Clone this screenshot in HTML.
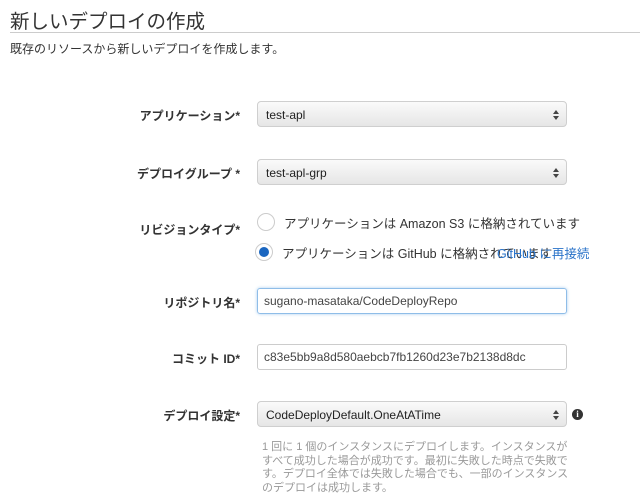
<!DOCTYPE html>
<html><head><meta charset="utf-8"><style>
body{margin:0;width:640px;height:494px;background:#fff;font-family:"Liberation Sans","Noto Sans CJK JP",sans-serif;color:#333;position:relative;overflow:hidden}
.a{position:absolute;white-space:nowrap}
.lbl{position:absolute;right:400px;font-size:12px;font-weight:bold;color:#333}
.sel{position:absolute;left:257px;width:310px;height:26px;border:1px solid #cfcfcf;border-radius:4px;background:linear-gradient(#fafafa,#e6e6e6);box-sizing:border-box;font-size:12px;line-height:26px;padding-left:8px;color:#222}
.sel:after{content:"";position:absolute;right:7px;top:8px;width:0;height:0;border-left:3px solid transparent;border-right:3px solid transparent;border-bottom:4px solid #444}
.sel:before{content:"";position:absolute;right:7px;top:14px;width:0;height:0;border-left:3px solid transparent;border-right:3px solid transparent;border-top:4px solid #444}
.inp{position:absolute;left:257px;width:310px;height:26px;border:1px solid #ccc;border-radius:3px;box-sizing:border-box;font-size:12px;line-height:24px;padding-left:6px;color:#444}
</style></head><body>
<div class="a" style="left:10px;top:5px;font-size:19.5px;color:#333">新しいデプロイの作成</div>
<div class="a" style="left:10px;top:32px;width:630px;height:1px;background:#ccc"></div>
<div class="a" style="left:10px;top:40px;font-size:12px;color:#333">既存のリソースから新しいデプロイを作成します。</div>

<div class="lbl" style="top:107px">アプリケーション*</div>
<div class="sel" style="top:101px">test-apl</div>

<div class="lbl" style="top:165px">デプロイグループ *</div>
<div class="sel" style="top:159px">test-apl-grp</div>

<div class="lbl" style="top:221px">リビジョンタイプ*</div>
<div class="a" style="left:257px;top:213px;width:18px;height:18px;border:1px solid #ccc;border-radius:50%;box-sizing:border-box"></div>
<div class="a" style="left:284px;top:213px;font-size:12.5px;color:#333">アプリケーションは Amazon S3 に格納されています</div>
<div class="a" style="left:255px;top:243px;width:18px;height:18px;border:1px solid #ccc;border-radius:50%;box-sizing:border-box;background:#fff"><div style="position:absolute;left:3px;top:3px;width:10px;height:10px;border-radius:50%;background:#1a66c0"></div></div>
<div class="a" style="left:282px;top:243px;font-size:12.5px;color:#333">アプリケーションは GitHub に格納されています</div>
<div class="a" style="left:497px;top:243px;font-size:12.5px;color:#2a73c9">GitHub に再接続</div>

<div class="lbl" style="top:294px">リポジトリ名*</div>
<div class="inp" style="top:288px;border-color:#8fbde8;box-shadow:0 0 3px #a9cdef">sugano-masataka/CodeDeployRepo</div>

<div class="lbl" style="top:350px">コミット ID*</div>
<div class="inp" style="top:344px">c83e5bb9a8d580aebcb7fb1260d23e7b2138d8dc</div>

<div class="lbl" style="top:407px">デプロイ設定*</div>
<div class="sel" style="top:401px">CodeDeployDefault.OneAtATime</div>
<div class="a" style="left:572px;top:409px;width:11px;height:11px;border-radius:50%;background:#333;color:#fff;font-size:9px;font-weight:bold;text-align:center;line-height:11px;font-family:'Liberation Serif',serif">i</div>

<div class="a" style="left:262px;top:441px;font-size:11px;line-height:13.5px;color:#999;white-space:normal;width:310px">1 回に 1 個のインスタンスにデプロイします。インスタンスが<br>すべて成功した場合が成功です。最初に失敗した時点で失敗で<br>す。デプロイ全体では失敗した場合でも、一部のインスタンス<br>のデプロイは成功します。</div>
</body></html>
